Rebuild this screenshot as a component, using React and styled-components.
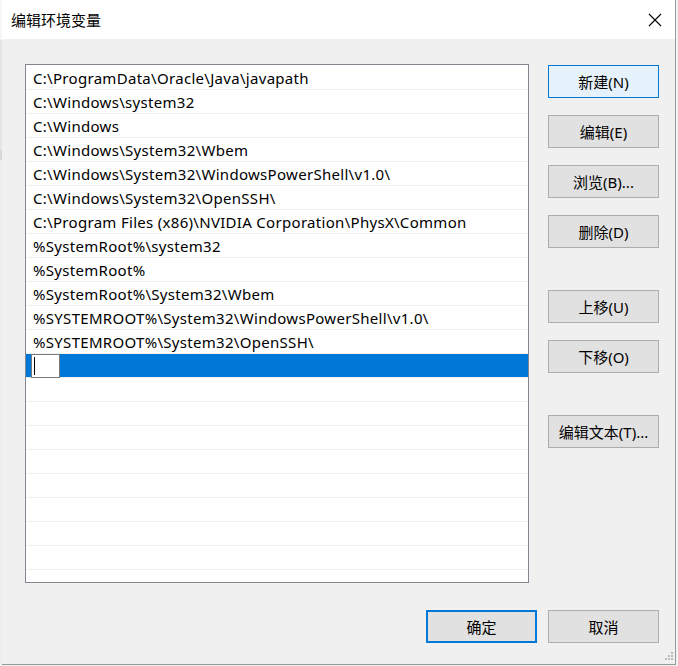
import React from 'react';
import styled, { createGlobalStyle } from 'styled-components';

const Global = createGlobalStyle`
  html, body {
    margin: 0;
    padding: 0;
    background: #f0f0f0;
  }
  body {
    font-family: "Noto Sans", "Noto Sans CJK SC", sans-serif;
  }
`

const Frame = styled.div`
  width: 678px;
  height: 666px;
  display: flex;
  overflow: hidden;
`

const Edge = styled.div`
  flex: none;
  width: 2px;
  background: ${p => p.$side === 'left'
    ? 'linear-gradient(#f6f6f6 0 40px, #e4e4e4 40px 150px, #d8d8d8 150px 160px, #ececec 160px)'
    : '#f3f3f3'};
`

const Window = styled.div`
  flex: 1;
  display: flex;
  flex-direction: column;
  border-right: 1px solid #9a9a9a;
  border-bottom: 1px solid #9a9a9a;
  position: relative;
  height: 664px;
`

const TitleBar = styled.div`
  flex: none;
  height: 39px;
  background: #fff;
  display: flex;
  align-items: center;
  justify-content: space-between;
  padding: 0 13px 0 9px;
`

const Title = styled.div`
  font-family: "Noto Sans CJK SC", sans-serif;
  font-size: 15px;
  color: #000;
  line-height: 1;
`

const Close = styled.div`
  width: 14px;
  height: 14px;
  display: flex;
`

const Body = styled.div`
  flex: 1;
  display: flex;
  flex-direction: column;
  padding: 25px 16px 0 23px;
`

const Main = styled.div`
  display: flex;
  gap: 19px;
`

const List = styled.div`
  flex: none;
  width: 502px;
  height: 516px;
  border: 1px solid #828790;
  background: #fff;
  padding-top: 1px;
  overflow: hidden;
`

const Row = styled.div`
  height: 23px;
  border-bottom: 1px solid #f0f0f0;
  display: flex;
  align-items: center;
  font-size: 15px;
  letter-spacing: 0.3px;
  color: #000;
  white-space: nowrap;
  background: ${p => (p.$selected ? '#0078d7' : '#fff')};
  padding-left: ${p => (p.$selected ? '5px' : '7px')};
`

const EditBox = styled.div`
  width: 29px;
  height: 24px;
  box-sizing: border-box;
  border: 1px solid #7a7a7a;
  background: #fff;
  display: flex;
  align-items: center;
  padding-left: 2px;
`

const Caret = styled.div`
  width: 1px;
  height: 18px;
  background: #000;
`

const Side = styled.div`
  display: flex;
  flex-direction: column;
  padding-top: 1px;
`

const Button = styled.div`
  width: 111px;
  height: 33px;
  box-sizing: border-box;
  display: flex;
  align-items: center;
  justify-content: center;
  background: ${p => (p.$hot ? '#e5f1fb' : '#e1e1e1')};
  border: ${p => (p.$default ? '2px solid #0078d7' : p.$hot ? '1px solid #0078d7' : '1px solid #adadad')};
  font-size: 15px;
  color: #000;
  margin-top: ${p => p.$gap || 0}px;
  white-space: nowrap;
`

const Footer = styled.div`
  display: flex;
  justify-content: flex-end;
  gap: 11px;
  margin-top: 27px;
`

const Grip = styled.svg`
  position: absolute;
  right: 1px;
  bottom: 1px;
`

const paths = [
  'C:\\ProgramData\\Oracle\\Java\\javapath',
  'C:\\Windows\\system32',
  'C:\\Windows',
  'C:\\Windows\\System32\\Wbem',
  'C:\\Windows\\System32\\WindowsPowerShell\\v1.0\\',
  'C:\\Windows\\System32\\OpenSSH\\',
  'C:\\Program Files (x86)\\NVIDIA Corporation\\PhysX\\Common',
  '%SystemRoot%\\system32',
  '%SystemRoot%',
  '%SystemRoot%\\System32\\Wbem',
  '%SYSTEMROOT%\\System32\\WindowsPowerShell\\v1.0\\',
  '%SYSTEMROOT%\\System32\\OpenSSH\\',
]

const blanks = Array.from({ length: 9 })

export default function App() {
  return (
    <>
      <Global />
      <Frame>
        <Edge $side="left" />
        <Window>
          <TitleBar>
            <Title>编辑环境变量</Title>
            <Close>
              <svg width="14" height="14" viewBox="0 0 14 14">
                <path d="M1 1L13 13M13 1L1 13" stroke="#000" strokeWidth="1.1" fill="none" />
              </svg>
            </Close>
          </TitleBar>
          <Body>
            <Main>
              <List>
                {paths.map(p => (
                  <Row key={p}>{p}</Row>
                ))}
                <Row $selected>
                  <EditBox>
                    <Caret />
                  </EditBox>
                </Row>
                {blanks.map((_, i) => (
                  <Row key={i} />
                ))}
              </List>
              <Side>
                <Button $hot>新建(N)</Button>
                <Button $gap={17}>编辑(E)</Button>
                <Button $gap={17}>浏览(B)...</Button>
                <Button $gap={17}>删除(D)</Button>
                <Button $gap={42}>上移(U)</Button>
                <Button $gap={17}>下移(O)</Button>
                <Button $gap={42}>编辑文本(T)...</Button>
              </Side>
            </Main>
            <Footer>
              <Button $default>确定</Button>
              <Button>取消</Button>
            </Footer>
          </Body>
          <Grip width="12" height="12" viewBox="0 0 12 12">
            <g fill="#bdbdbd">
              <rect x="9" y="1" width="2" height="2" />
              <rect x="6" y="4" width="2" height="2" />
              <rect x="9" y="4" width="2" height="2" />
              <rect x="3" y="7" width="2" height="2" />
              <rect x="6" y="7" width="2" height="2" />
              <rect x="9" y="7" width="2" height="2" />
            </g>
          </Grip>
        </Window>
        <Edge />
      </Frame>
    </>
  );
}
